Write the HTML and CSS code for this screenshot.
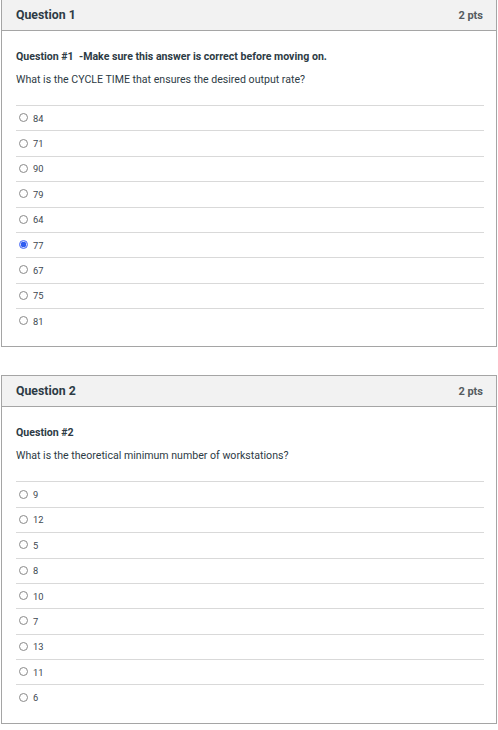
FILE: index.html
```html
<!DOCTYPE html>
<html>
<head>
<meta charset="utf-8">
<link rel="stylesheet" href="styles.css">
</head>
<body>
<div class="page">
  <section class="card">
    <header class="card-head">
      <span class="q-title">Question 1</span>
      <span class="q-pts">2 pts</span>
    </header>
    <div class="card-body">
      <p class="q-lead">Question #1&nbsp; -Make sure this answer is correct before moving on.</p>
      <p class="q-text">What is the CYCLE TIME that ensures the desired output rate?</p>
      <ul class="answers">
        <li class="answer"><span class="radio"></span><span class="label">84</span></li>
        <li class="answer"><span class="radio"></span><span class="label">71</span></li>
        <li class="answer"><span class="radio"></span><span class="label">90</span></li>
        <li class="answer"><span class="radio"></span><span class="label">79</span></li>
        <li class="answer"><span class="radio"></span><span class="label">64</span></li>
        <li class="answer"><span class="radio checked"></span><span class="label">77</span></li>
        <li class="answer"><span class="radio"></span><span class="label">67</span></li>
        <li class="answer"><span class="radio"></span><span class="label">75</span></li>
        <li class="answer"><span class="radio"></span><span class="label">81</span></li>
      </ul>
    </div>
  </section>
  <section class="card">
    <header class="card-head">
      <span class="q-title">Question 2</span>
      <span class="q-pts">2 pts</span>
    </header>
    <div class="card-body">
      <p class="q-lead">Question #2</p>
      <p class="q-text">What is the theoretical minimum number of workstations?</p>
      <ul class="answers">
        <li class="answer"><span class="radio"></span><span class="label">9</span></li>
        <li class="answer"><span class="radio"></span><span class="label">12</span></li>
        <li class="answer"><span class="radio"></span><span class="label">5</span></li>
        <li class="answer"><span class="radio"></span><span class="label">8</span></li>
        <li class="answer"><span class="radio"></span><span class="label">10</span></li>
        <li class="answer"><span class="radio"></span><span class="label">7</span></li>
        <li class="answer"><span class="radio"></span><span class="label">13</span></li>
        <li class="answer"><span class="radio"></span><span class="label">11</span></li>
        <li class="answer"><span class="radio"></span><span class="label">6</span></li>
      </ul>
    </div>
  </section>
</div>
</body>
</html>
```
FILE: styles.css
```css
html, body {
  margin: 0;
  padding: 0;
  background: #ffffff;
}
body {
  font-family: Roboto, "Liberation Sans", Arial, sans-serif;
  color: #2d3b45;
}
.page {
  display: flex;
  flex-direction: column;
  gap: 28px;
  padding: 0 1px;
}
.card {
  border: 1px solid #a5a5a5;
  background: #fff;
}
.card:first-child {
  margin-top: -1px;
}
.card-head {
  display: flex;
  justify-content: space-between;
  align-items: center;
  height: 30px;
  padding: 0 13px 0 14px;
  background: #f2f2f2;
  border-bottom: 1px solid #a5a5a5;
}
.q-title {
  font-size: 12.3px;
  font-weight: 700;
  color: #2d3b45;
}
.q-pts {
  font-size: 11px;
  font-weight: 700;
  color: #555b60;
}
.card-body {
  padding: 19px 12px 13px 14px;
}
.q-lead {
  margin: 0;
  font-size: 10.6px;
  line-height: 14px;
  font-weight: 700;
  color: #2d3b45;
}
.q-text {
  margin: 9px 0 0;
  font-size: 10.6px;
  line-height: 14px;
  color: #2d3b45;
}
.answers {
  list-style: none;
  margin: 18px 0 0;
  padding: 0;
  display: flex;
  flex-direction: column;
}
.answer {
  display: flex;
  align-items: center;
  gap: 5px;
  height: 24.375px;
  border-top: 1px solid #d9d9d9;
  padding-left: 3px;
}
.radio {
  width: 9px;
  height: 9px;
  border: 1px solid #8a8a8a;
  border-radius: 50%;
  box-sizing: border-box;
  flex: none;
  margin-top: -1px;
}
.radio.checked {
  border-color: #4a6cf7;
  background: radial-gradient(circle, #2f5cf0 0 2.6px, #c9d4fb 3px);
}
.label {
  font-size: 9.3px;
  color: #3d4750;
}
```
